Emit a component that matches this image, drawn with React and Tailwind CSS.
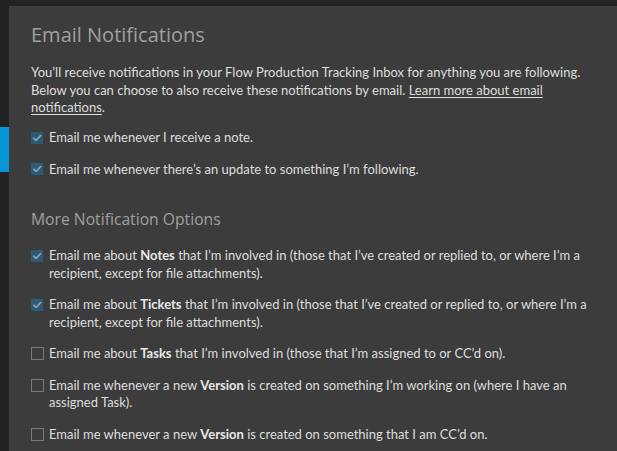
function Check({ checked }) {
  if (checked) {
    return (
      <span className="flex h-[12px] w-[12px] shrink-0 items-center justify-center bg-[#2c5a77]">
        <svg viewBox="0 0 12 12" className="h-[12px] w-[12px]">
          <path d="M2.6 6.2 L5 8.5 L9.6 3.6" fill="none" stroke="#8ea5b3" strokeWidth="1.6" strokeLinecap="round" strokeLinejoin="round" />
        </svg>
      </span>
    );
  }
  return <span className="h-[13px] w-[13px] shrink-0 border border-[#7b7b7b]" />;
}

function Row({ checked, children }) {
  return (
    <div className="flex items-start">
      <div className="flex h-[17.5px] w-[18px] shrink-0 items-center">
        <Check checked={checked} />
      </div>
      <p className="leading-[17.5px]">{children}</p>
    </div>
  );
}

export default function App() {
  return (
    <div className="flex h-[451px] w-[617px] flex-col overflow-hidden bg-[#232323]" style={{ fontFamily: "Lato, 'Liberation Sans', sans-serif" }}>
      <div className="h-[6px] shrink-0 bg-[#232323]" />
      <div className="flex min-h-0 flex-1">
        <div className="flex w-[9px] shrink-0 flex-col bg-[#232323]">
          <div className="h-[121px] shrink-0" />
          <div className="h-[45px] w-[9px] bg-[#0696d7]" />
        </div>
        <div className="flex-1 bg-[#3c3c3c] pl-[22px] pr-[25px] pt-[16px] text-[13px] text-[#dedede]">
          <h1 className="text-[20px] leading-[26px] font-normal text-[#a0a0a0]" style={{ fontFamily: "'Open Sans', sans-serif" }}>
            Email Notifications
          </h1>
          <p className="mt-[16px] leading-[17.5px]">
            You’ll receive notifications in your Flow Production Tracking Inbox for anything you are following. Below you can choose to also receive these notifications by email.{" "}
            <a className="underline underline-offset-2">Learn more about email notifications</a>.
          </p>
          <div className="mt-[12.5px] flex flex-col gap-[14px]">
            <Row checked>Email me whenever I receive a note.</Row>
            <Row checked>Email me whenever there’s an update to something I’m following.</Row>
          </div>
          <h2 className="mt-[29.8px] text-[15.7px] leading-[22px] font-normal text-[#a0a0a0]" style={{ fontFamily: "'Open Sans', sans-serif" }}>
            More Notification Options
          </h2>
          <div className="mt-[17.3px] flex flex-col gap-[14px]">
            <Row checked>
              Email me about <b className="font-bold text-[#e8e8e8]">Notes</b> that I’m involved in (those that I’ve created or replied to, or where I’m a recipient, except for file attachments).
            </Row>
            <Row checked>
              Email me about <b className="font-bold text-[#e8e8e8]">Tickets</b> that I’m involved in (those that I’ve created or replied to, or where I’m a recipient, except for file attachments).
            </Row>
            <Row>
              Email me about <b className="font-bold text-[#e8e8e8]">Tasks</b> that I’m involved in (those that I’m assigned to or CC’d on).
            </Row>
            <Row>
              Email me whenever a new <b className="font-bold text-[#e8e8e8]">Version</b> is created on something I’m working on (where I have an assigned Task).
            </Row>
            <Row>
              Email me whenever a new <b className="font-bold text-[#e8e8e8]">Version</b> is created on something that I am CC’d on.
            </Row>
          </div>
        </div>
      </div>
    </div>
  );
}
